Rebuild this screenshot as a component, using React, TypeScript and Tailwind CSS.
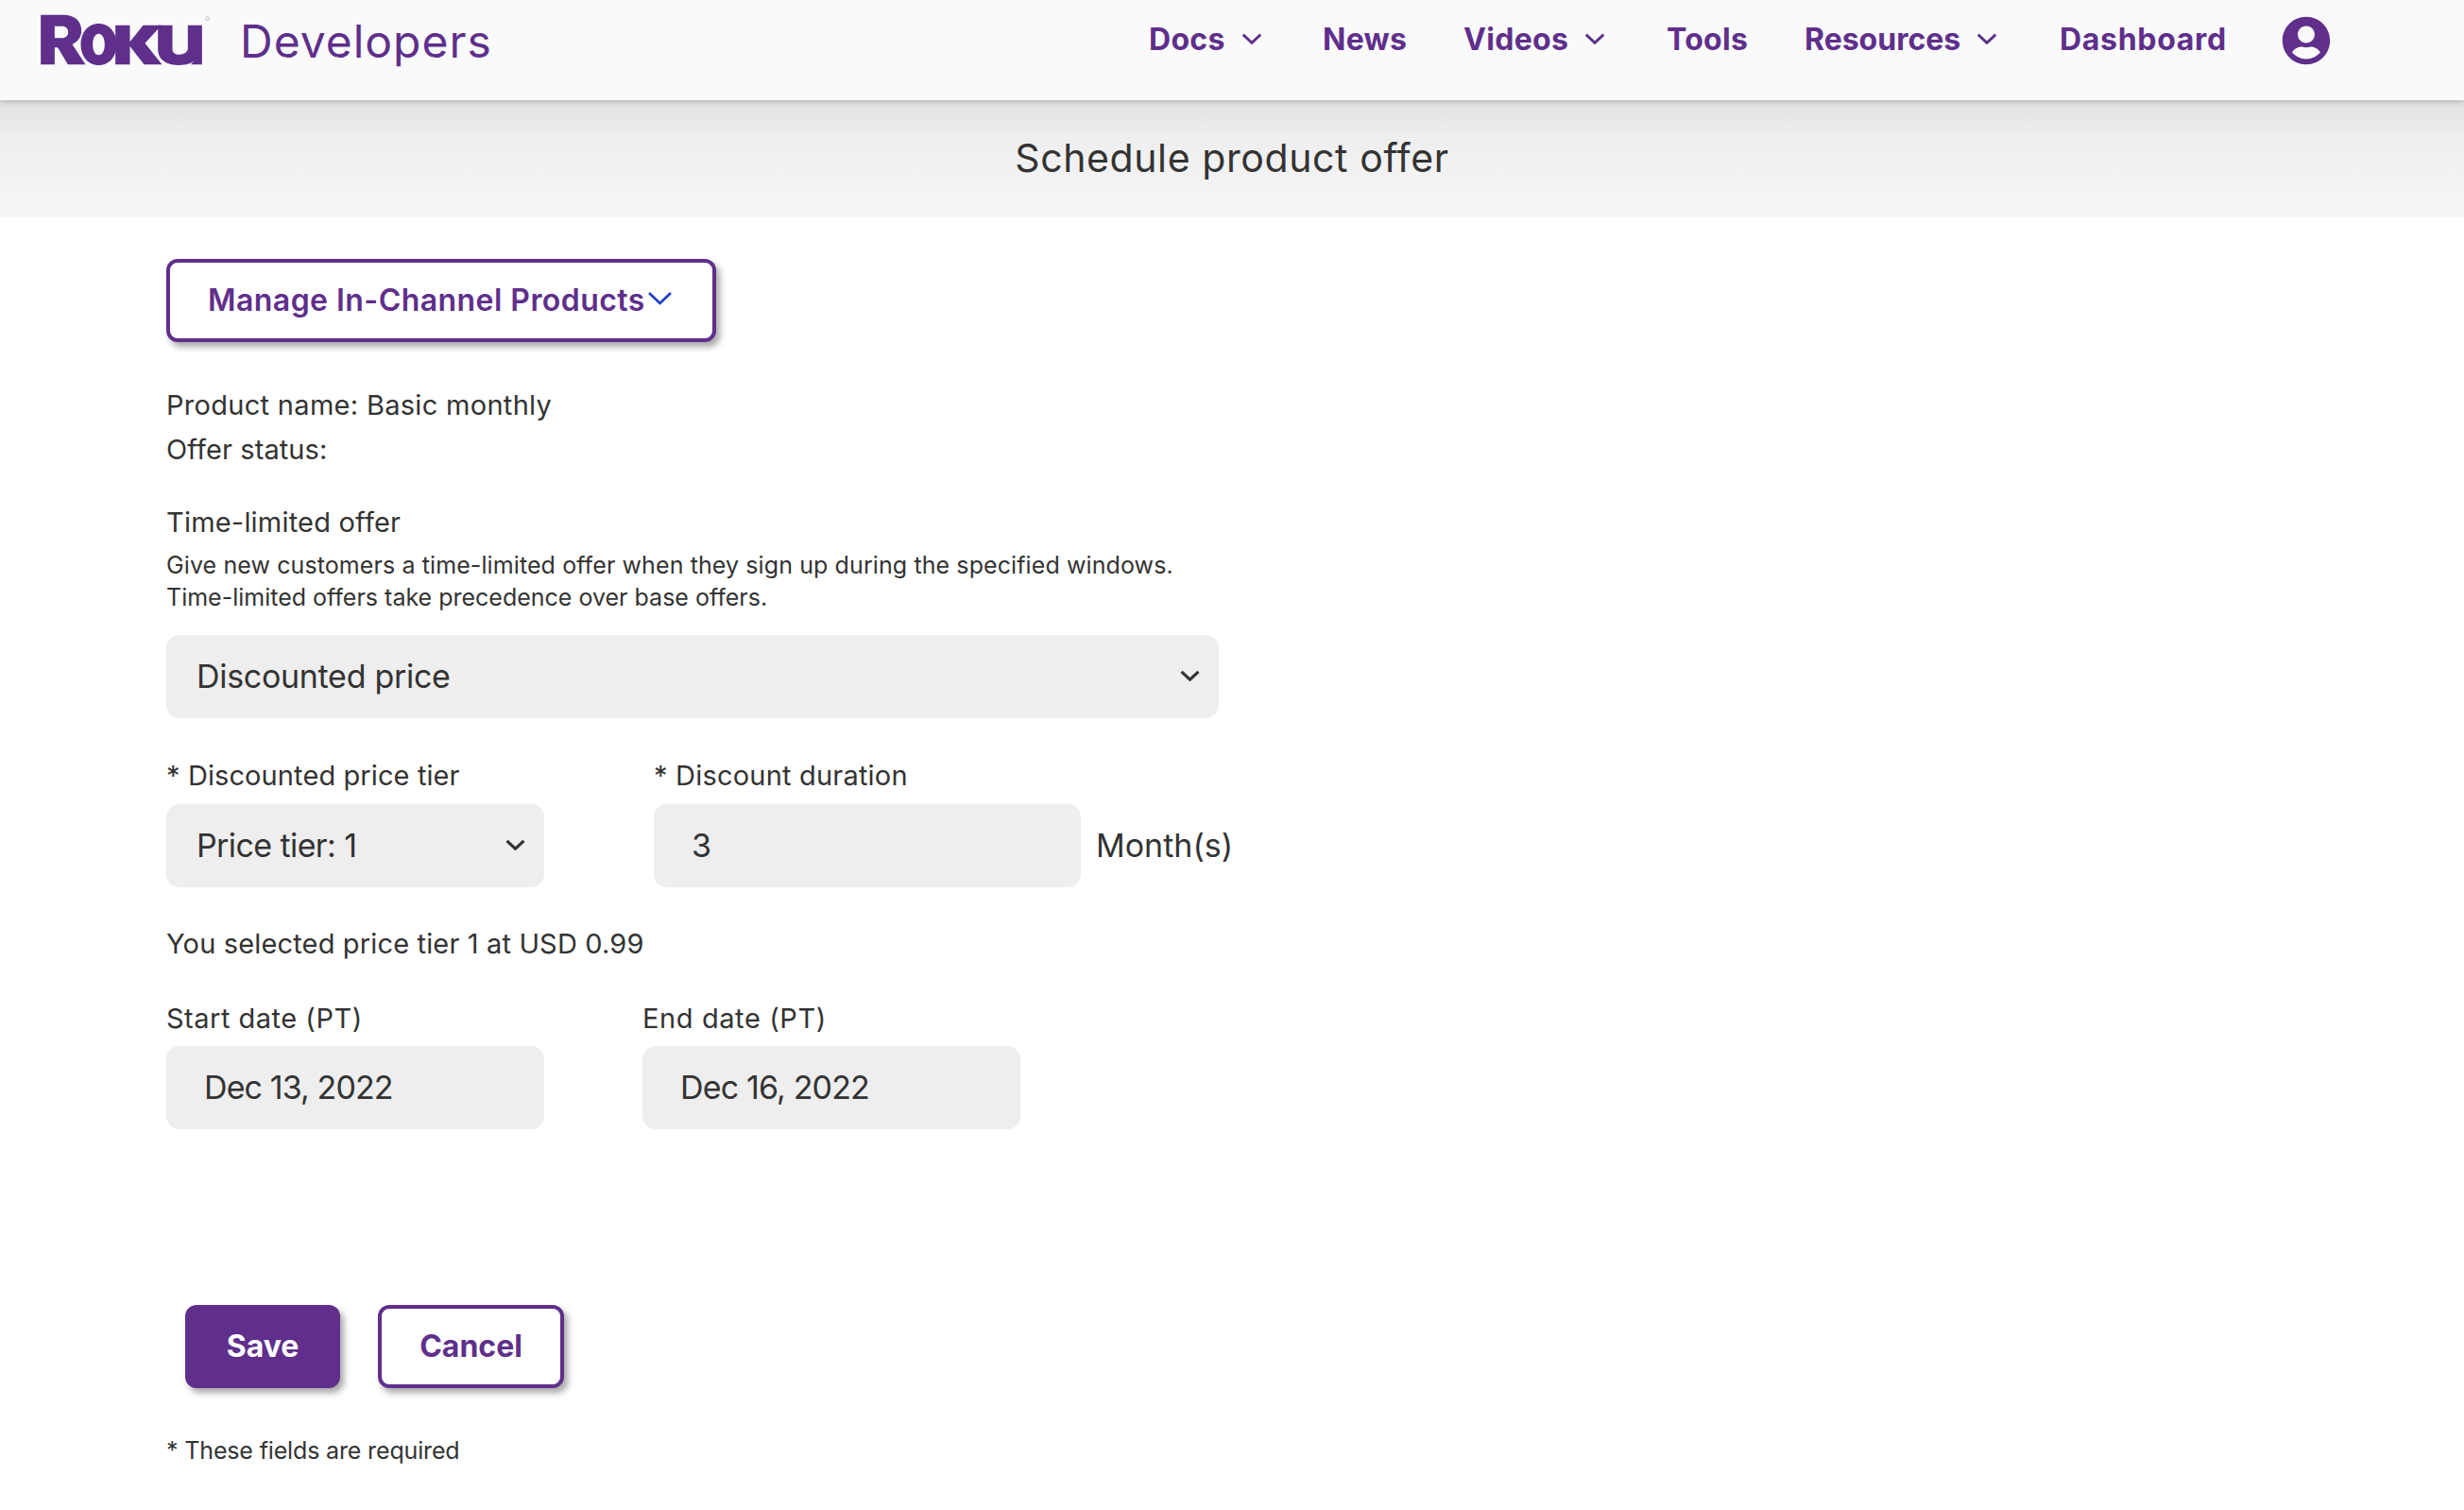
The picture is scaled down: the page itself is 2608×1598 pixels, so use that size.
import { FaUserCircle } from "react-icons/fa";

function Chevron({ className, weight = 2.6 }: { className: string; weight?: number }) {
  return (
    <svg viewBox="0 0 20 11" fill="none" stroke="currentColor" strokeWidth={weight} className={className}>
      <path d="M1.5 1.5 10 9.5 18.5 1.5" />
    </svg>
  );
}

function RokuLogo() {
  return (
    <svg viewBox="0 0 566 162" className="w-[189px] h-[54px] text-[#5f2f8b]" fill="currentColor">
      <path
        fillRule="evenodd"
        d="M0 2H72C108 2 129 22 129 52C129 74 117 88 100 96L142 160H86L54 106H44V160H0ZM44 38V76H66C80 76 87 68 87 57C87 45 80 38 66 38Z"
      />
      <path
        fillRule="evenodd"
        d="M184 30C219 30 241 60 241 96C241 132 219 162 184 162C149 162 127 132 127 96C127 60 149 30 184 30ZM184 62C172 62 165 77 165 96C165 115 172 130 184 130C196 130 203 115 203 96C203 77 196 62 184 62Z"
      />
      <path d="M237 35H283V88L325 35H383L331 92L385 160H328L283 102V160H237Z" />
      <path d="M372 35H418V110C418 122 426 128 440 128C456 128 467 120 467 108V35H512V160H476L488 148C478 156 462 162 440 162C400 162 372 146 372 112Z" />
      <circle cx="529" cy="14" r="6" fill="none" stroke="currentColor" strokeWidth="1.5" opacity="0.6" />
    </svg>
  );
}

const purple = "text-[#5f2f8b]";

function NavItem({
  label,
  chevron,
  width,
  tracking = "tracking-[0.3px]",
}: {
  label: string;
  chevron?: boolean;
  width: string;
  tracking?: string;
}) {
  return (
    <div className={`flex items-center ${width}`}>
      <span className={`text-[32px] font-bold leading-none ${tracking} ${purple}`}>{label}</span>
      {chevron && <Chevron className="w-[22px] h-[12px] ml-[17px] mb-[3px] text-[#5f2f8b]" />}
    </div>
  );
}

export default function App() {
  return (
    <div className="min-h-screen bg-white text-[#333] font-['Inter',sans-serif]">
      <header className="relative h-[106px] bg-[#fafafa] flex items-start shadow-[0_2px_6px_rgba(0,0,0,0.18)]">
        <div className="ml-[43px] mt-[15px]">
          <RokuLogo />
        </div>
        <span className={`ml-[22px] mt-[16px] text-[48px] leading-[56px] font-normal tracking-[1px] ${purple}`}>Developers</span>
        <nav className="absolute left-[1216px] top-[17px] h-[50px] flex items-center">
          <NavItem label="Docs" chevron width="w-[184px]" />
          <NavItem label="News" width="w-[149px]" />
          <NavItem label="Videos" chevron width="w-[215px]" />
          <NavItem label="Tools" width="w-[146px]" />
          <NavItem label="Resources" chevron width="w-[270px]" tracking="tracking-[0px]" />
          <NavItem label="Dashboard" width="w-[235px]" tracking="tracking-[0.7px]" />
          <FaUserCircle className="w-[52px] h-[52px] text-[#5f2f8b] translate-y-[1px]" />
        </nav>
      </header>

      <div className="h-[124px] bg-[linear-gradient(#e0e0e0,#eeeeee_30%,#f6f6f6)] flex items-center justify-center pb-[2px]">
        <h1 className="text-[41px] font-normal leading-none tracking-[0.6px]">Schedule product offer</h1>
      </div>

      <main className="pl-[176px]">
        <button className="mt-[44px] w-[582px] h-[88px] pl-[40px] flex items-center bg-white border-4 border-[#5f2f8b] rounded-[12px] shadow-[4px_5px_7px_rgba(0,0,0,0.35)]">
          <span className={`text-[32px] font-semibold leading-none tracking-[0.45px] ${purple}`}>Manage In-Channel Products</span>
          <Chevron className="w-[27px] h-[15px] ml-[2px] mb-[6px] text-[#1b3fc4]" weight={2} />
        </button>

        <p className="mt-[49px] text-[29px] leading-[36px] tracking-[0.3px]">Product name: Basic monthly</p>
        <p className="mt-[11px] text-[29px] leading-[36px] tracking-[0.1px]">Offer status:</p>
        <p className="mt-[41px] text-[29px] leading-[36px] tracking-[0.2px]">Time-limited offer</p>
        <p className="mt-[10px] text-[25px] leading-[34px] tracking-[0.1px]">Give new customers a time-limited offer when they sign up during the specified windows.</p>
        <p className="text-[25px] leading-[34px]">Time-limited offers take precedence over base offers.</p>

        <div className="mt-[23px] w-[1114px] h-[88px] bg-[#eeeeee] rounded-[14px] pl-[32px] pr-[20px] pb-[2px] flex items-center justify-between">
          <span className="text-[34px] tracking-[-0.3px]">Discounted price</span>
          <Chevron className="w-[21px] h-[12px] text-[#333]" weight={3} />
        </div>

        <div className="mt-[43px] flex">
          <div className="w-[516px]">
            <p className="text-[29px] leading-[36px] tracking-[0.1px]">* Discounted price tier</p>
            <div className="mt-[12px] w-[400px] h-[88px] bg-[#eeeeee] rounded-[14px] pl-[32px] pr-[20px] pb-[2px] flex items-center justify-between">
              <span className="text-[34px] tracking-[-0.6px]">Price tier: 1</span>
              <Chevron className="w-[21px] h-[12px] text-[#333]" weight={3} />
            </div>
          </div>
          <div>
            <p className="text-[29px] leading-[36px] tracking-[0.2px]">* Discount duration</p>
            <div className="mt-[12px] flex items-center">
              <div className="w-[452px] h-[88px] bg-[#eeeeee] rounded-[14px] pl-[40px] pb-[2px] flex items-center text-[34px]">3</div>
              <span className="ml-[16px] mb-[2px] text-[34px]">Month(s)</span>
            </div>
          </div>
        </div>

        <p className="mt-[42px] text-[29px] leading-[36px] tracking-[0.15px]">You selected price tier 1 at USD 0.99</p>

        <div className="mt-[43px] flex">
          <div className="w-[504px]">
            <p className="text-[29px] leading-[36px] tracking-[0.5px]">Start date (PT)</p>
            <div className="mt-[11px] w-[400px] h-[88px] bg-[#eeeeee] rounded-[14px] pl-[40px] pb-[2px] flex items-center text-[34px] tracking-[-0.9px]">Dec 13, 2022</div>
          </div>
          <div>
            <p className="text-[29px] leading-[36px] tracking-[0.6px]">End date (PT)</p>
            <div className="mt-[11px] w-[400px] h-[88px] bg-[#eeeeee] rounded-[14px] pl-[40px] pb-[2px] flex items-center text-[34px] tracking-[-0.85px]">Dec 16, 2022</div>
          </div>
        </div>

        <div className="mt-[186px] ml-[20px] flex gap-[40px]">
          <button className="w-[164px] h-[88px] bg-[#5f2f8b] text-white rounded-[12px] text-[32px] font-bold shadow-[4px_5px_7px_rgba(0,0,0,0.35)]">Save</button>
          <button className={`w-[197px] h-[88px] bg-white border-4 border-[#5f2f8b] rounded-[12px] text-[32px] font-bold shadow-[4px_5px_7px_rgba(0,0,0,0.35)] ${purple}`}>Cancel</button>
        </div>

        <p className="mt-[50px] text-[25px] leading-[32px] tracking-[-0.15px]">* These fields are required</p>
      </main>
    </div>
  );
}
